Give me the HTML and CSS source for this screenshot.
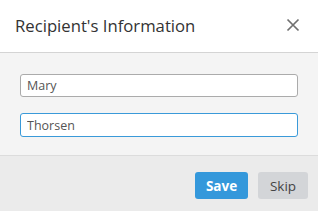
FILE: index.html
```html
<!DOCTYPE html>
<html>
<head>
<meta charset="utf-8">
<link rel="stylesheet" href="styles.css">
</head>
<body>
<div class="dialog">
  <div class="header">
    <div class="title">Recipient's Information</div>
    <svg class="close" width="14" height="14" viewBox="0 0 14 14"><path d="M1.5 1.5 L12.5 12.5 M12.5 1.5 L1.5 12.5" stroke="#707070" stroke-width="1.7" fill="none"/></svg>
  </div>
  <div class="body">
    <input class="field" type="text" value="Mary">
    <input class="field focus" type="text" value="Thorsen">
  </div>
  <div class="footer">
    <button class="btn save">Save</button>
    <button class="btn skip">Skip</button>
  </div>
</div>
</body>
</html>
```
FILE: styles.css
```css
html, body {
  margin: 0;
  padding: 0;
  background: #ffffff;
}
.dialog {
  width: 318px;
  height: 211px;
  display: flex;
  flex-direction: column;
  font-family: "Open Sans", "Liberation Sans", sans-serif;
}
.header {
  box-sizing: border-box;
  border-bottom: 1px solid #d4d4d4;
  display: flex;
  align-items: center;
  justify-content: space-between;
  padding: 0 18px 0 15px;
  background: #fff;
  height: 53px;
}
.title {
  font-size: 16.7px;
  color: #333;
  margin-top: -1px;
}
.close {
  display: block;
  margin-top: -2px;
}
.body {
  background: #f4f4f4;
  padding: 21px 20px 0 20px;
  height: 103px;
  box-sizing: border-box;
  border-bottom: 1px solid #dcdcdc;
  display: flex;
  flex-direction: column;
  gap: 16px;
}
.field {
  display: block;
  width: 278px;
  height: 23px;
  box-sizing: border-box;
  margin: 0;
  border: 1px solid #ababab;
  border-radius: 3px;
  background: #fff;
  padding: 0 6px;
  font-family: "Open Sans", "Liberation Sans", sans-serif;
  font-size: 12.5px;
  color: #555;
  outline: none;
}
.field.focus {
  border-color: #3a9ad9;
  height: 24px;
}
.footer {
  flex: 1;
  background: #ebebeb;
  display: flex;
  justify-content: flex-end;
  align-items: flex-start;
  padding: 16px 10px 0 0;
  gap: 10px;
}
.btn {
  height: 27px;
  border: none;
  border-radius: 3px;
  font-family: "Open Sans", "Liberation Sans", sans-serif;
  font-size: 13.5px;
  padding: 0;
  margin: 0;
}
.save {
  width: 53px;
  background: #3498db;
  color: #fff;
  font-weight: bold;
}
.skip {
  width: 50px;
  background: #d3d5d8;
  color: #444;
}
```
